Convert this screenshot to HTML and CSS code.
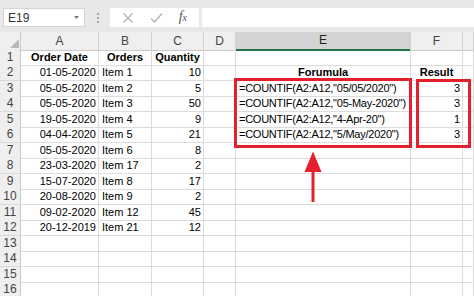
FILE: index.html
```html
<!DOCTYPE html>
<html lang="en">
<head>
    <meta charset="UTF-8">
    <title>COUNTIF dates</title>
    <link rel="stylesheet" href="styles.css">
</head>
<body>
    <div class="formula-bar">
        <div class="name-box">
            <span>E19</span>
            <svg width="5" height="3" viewBox="0 0 5 3"><path d="M0 0 L5 0 L2.5 3 Z" fill="#777"/></svg>
        </div>
        <div class="grip"><span></span><span></span><span></span></div>
        <div class="fx-buttons">
            <svg width="12" height="12" viewBox="0 0 12 12"><path d="M1.5 1.5 L10.5 10.5 M10.5 1.5 L1.5 10.5" stroke="#b0b0b0" stroke-width="1.2" fill="none"/></svg>
            <svg width="13" height="12" viewBox="0 0 13 12"><path d="M1 6.5 L4.5 10 L12 1.5" stroke="#b0b0b0" stroke-width="1.2" fill="none"/></svg>
            <span class="fx"><i>f</i><i class="x">x</i></span>
        </div>
        <div class="fx-input"></div>
    </div>

    <div class="sheet">
        <div class="row head">
            <div class="corner"><svg width="9" height="9" viewBox="0 0 9 9"><path d="M9 0 L9 9 L0 9 Z" fill="#b8b8b8"/></svg></div>
            <div class="col-head">A</div>
            <div class="col-head">B</div>
            <div class="col-head">C</div>
            <div class="col-head">D</div>
            <div class="col-head selected">E</div>
            <div class="col-head">F</div>
            <div class="col-head"></div>
        </div>
        <div class="row">
            <div class="rh">1</div>
            <div class="cell b c">Order Date</div><div class="cell b c">Orders</div><div class="cell b c">Quantity</div>
            <div class="cell"></div><div class="cell"></div><div class="cell"></div><div class="cell"></div>
        </div>
        <div class="row">
            <div class="rh">2</div>
            <div class="cell r">01-05-2020</div><div class="cell">Item 1</div><div class="cell r">10</div>
            <div class="cell"></div><div class="cell b c">Forumula</div><div class="cell b c">Result</div><div class="cell"></div>
        </div>
        <div class="row">
            <div class="rh">3</div>
            <div class="cell r">05-05-2020</div><div class="cell">Item 2</div><div class="cell r">5</div>
            <div class="cell"></div><div class="cell f">=COUNTIF(A2:A12,"05/05/2020")</div><div class="cell r">3</div><div class="cell"></div>
        </div>
        <div class="row">
            <div class="rh">4</div>
            <div class="cell r">05-05-2020</div><div class="cell">Item 3</div><div class="cell r">50</div>
            <div class="cell"></div><div class="cell f">=COUNTIF(A2:A12,"05-May-2020")</div><div class="cell r">3</div><div class="cell"></div>
        </div>
        <div class="row">
            <div class="rh">5</div>
            <div class="cell r">19-05-2020</div><div class="cell">Item 4</div><div class="cell r">9</div>
            <div class="cell"></div><div class="cell f">=COUNTIF(A2:A12,"4-Apr-20")</div><div class="cell r">1</div><div class="cell"></div>
        </div>
        <div class="row">
            <div class="rh">6</div>
            <div class="cell r">04-04-2020</div><div class="cell">Item 5</div><div class="cell r">21</div>
            <div class="cell"></div><div class="cell f">=COUNTIF(A2:A12,"5/May/2020")</div><div class="cell r">3</div><div class="cell"></div>
        </div>
        <div class="row">
            <div class="rh">7</div>
            <div class="cell r">05-05-2020</div><div class="cell">Item 6</div><div class="cell r">8</div>
            <div class="cell"></div><div class="cell"></div><div class="cell"></div><div class="cell"></div>
        </div>
        <div class="row">
            <div class="rh">8</div>
            <div class="cell r">23-03-2020</div><div class="cell">Item 17</div><div class="cell r">2</div>
            <div class="cell"></div><div class="cell"></div><div class="cell"></div><div class="cell"></div>
        </div>
        <div class="row">
            <div class="rh">9</div>
            <div class="cell r">15-07-2020</div><div class="cell">Item 8</div><div class="cell r">17</div>
            <div class="cell"></div><div class="cell"></div><div class="cell"></div><div class="cell"></div>
        </div>
        <div class="row">
            <div class="rh">10</div>
            <div class="cell r">20-08-2020</div><div class="cell">Item 9</div><div class="cell r">2</div>
            <div class="cell"></div><div class="cell"></div><div class="cell"></div><div class="cell"></div>
        </div>
        <div class="row">
            <div class="rh">11</div>
            <div class="cell r">09-02-2020</div><div class="cell">Item 12</div><div class="cell r">45</div>
            <div class="cell"></div><div class="cell"></div><div class="cell"></div><div class="cell"></div>
        </div>
        <div class="row">
            <div class="rh">12</div>
            <div class="cell r">20-12-2019</div><div class="cell">Item 21</div><div class="cell r">12</div>
            <div class="cell"></div><div class="cell"></div><div class="cell"></div><div class="cell"></div>
        </div>
        <div class="row">
            <div class="rh">13</div>
            <div class="cell"></div><div class="cell"></div><div class="cell"></div>
            <div class="cell"></div><div class="cell"></div><div class="cell"></div><div class="cell"></div>
        </div>
        <div class="row">
            <div class="rh">14</div>
            <div class="cell"></div><div class="cell"></div><div class="cell"></div>
            <div class="cell"></div><div class="cell"></div><div class="cell"></div><div class="cell"></div>
        </div>
        <div class="row">
            <div class="rh">15</div>
            <div class="cell"></div><div class="cell"></div><div class="cell"></div>
            <div class="cell"></div><div class="cell"></div><div class="cell"></div><div class="cell"></div>
        </div>
        <div class="row">
            <div class="rh">16</div>
            <div class="cell"></div><div class="cell"></div><div class="cell"></div>
            <div class="cell"></div><div class="cell"></div><div class="cell"></div><div class="cell"></div>
        </div>

        <!-- red highlight boxes + arrow drawn over the grid -->
        <div class="mark mark-formula"></div>
        <div class="mark mark-result"></div>
        <svg class="arrow" width="22" height="54" viewBox="0 0 22 54">
            <path d="M11 1.5 L19.5 22 L2.5 22 Z" fill="#e3202b"/>
            <rect x="9.5" y="20" width="3" height="32" fill="#e3202b"/>
        </svg>
    </div>
</body>
</html>
```

FILE: styles.css
```css
body {
    margin: 0;
    width: 474px;
    height: 296px;
    overflow: hidden;
    background-color: #ffffff;
    font-family: "Liberation Sans", Arial, sans-serif;
    font-size: 11px;
    color: #000;
}

.formula-bar {
    display: flex;
    align-items: center;
    height: 32px;
    padding: 8px 0 5px 3px;
    box-sizing: border-box;
    background-color: #e8e8e8;
}

.name-box {
    width: 82px;
    height: 19px;
    box-sizing: border-box;
    background-color: #fff;
    border: 1px solid #d4d4d4;
    display: flex;
    align-items: center;
    justify-content: space-between;
    padding: 0 5px 0 4px;
    font-size: 12px;
    color: #333;
}

.grip {
    width: 25px;
    display: flex;
    flex-direction: column;
    align-items: center;
    gap: 2px;
}

.grip span {
    width: 2px;
    height: 2px;
    background-color: #a8a8a8;
}

.fx-buttons {
    width: 89px;
    height: 19px;
    background-color: #fff;
    display: flex;
    align-items: center;
    justify-content: space-around;
    padding: 0 4px;
    box-sizing: border-box;
}

.fx {
    font-family: "Liberation Serif", "Times New Roman", serif;
    font-size: 14px;
    color: #555;
    line-height: 14px;
}

.fx .x {
    font-size: 10px;
}

.fx-input {
    flex: 1;
    height: 19px;
    margin-left: 3px;
    background-color: #fff;
}

.sheet {
    position: relative;
}

.row {
    display: grid;
    grid-template-columns: 21px 78px 53px 52px 32px 175px 52px 11px;
    height: 15.47px;
}

.row.head {
    height: 18px;
}

.corner {
    background-color: #efefef;
    border-right: 1px solid #c9c9c9;
    border-bottom: 1px solid #c9c9c9;
    display: flex;
    align-items: flex-end;
    justify-content: flex-end;
    padding: 0 1px 2px 0;
}

.col-head {
    background-color: #efefef;
    border-right: 1px solid #d0d0d0;
    border-bottom: 1px solid #c9c9c9;
    color: #444;
    font-size: 12px;
    text-align: center;
    line-height: 18px;
}

.col-head.selected {
    background-color: #d3d3d3;
    color: #222;
    border-bottom: 2px solid #217346;
    line-height: 17px;
}

.rh {
    background-color: #efefef;
    border-right: 1px solid #c9c9c9;
    border-bottom: 1px solid #dadada;
    color: #444;
    font-size: 12px;
    text-align: center;
    line-height: 15px;
}

.cell {
    border-right: 1px solid #dcdcdc;
    border-bottom: 1px solid #dcdcdc;
    padding: 0 2px 0 3px;
    line-height: 15px;
    white-space: nowrap;
}

.cell.r {
    text-align: right;
}

.cell.c {
    text-align: center;
    padding: 0;
}

.cell.b {
    font-weight: bold;
}

.cell.f {
    letter-spacing: -0.25px;
}

.mark {
    position: absolute;
    border: 3px solid #e3202b;
    box-sizing: border-box;
}

.mark-formula {
    left: 234px;
    top: 46px;
    width: 178px;
    height: 70px;
}

.mark-result {
    left: 416px;
    top: 47px;
    width: 55px;
    height: 69px;
}

.arrow {
    position: absolute;
    left: 302px;
    top: 118px;
}
```
